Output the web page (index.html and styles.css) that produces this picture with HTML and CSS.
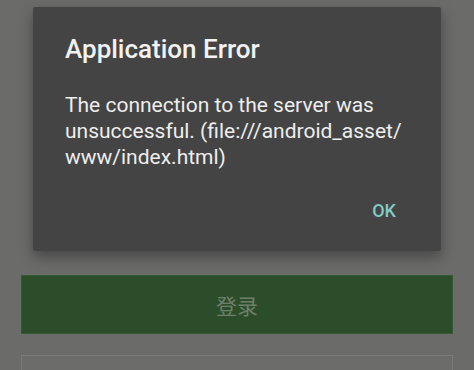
FILE: index.html
```html
<!DOCTYPE html>
<html>
<head>
<meta charset="utf-8">
<link rel="stylesheet" href="styles.css">
</head>
<body>
<div class="page">
  <div class="top-spacer"></div>
  <button class="login">登录</button>
  <div class="field"></div>
</div>
<div class="scrim"></div>
<div class="dialog">
  <h1 class="title">Application Error</h1>
  <p class="message">The connection to the server was unsuccessful. (file:///android_asset/<wbr>www/index.html)</p>
  <div class="actions"><span class="ok">OK</span></div>
</div>
</body>
</html>
```

FILE: styles.css
```css
html, body {
  margin: 0;
  padding: 0;
  width: 474px;
  height: 370px;
  overflow: hidden;
  background: #6b6c69;
  font-family: Roboto, "Noto Sans CJK SC", sans-serif;
}
.page {
  display: flex;
  flex-direction: column;
  padding: 0 21px;
}
.top-spacer {
  height: 275px;
}
.login {
  height: 59px;
  width: 100%;
  border: 1px solid #355a33;
  background: #2c4d2a;
  color: #6e8068;
  font-size: 21px;
  font-family: "Noto Sans CJK SC", sans-serif;
  padding: 0;
}
.field {
  margin-top: 21px;
  height: 14px;
  border: 1px solid #7a7b78;
  border-bottom: none;
  background: #6c6d6a;
}
.scrim {
  position: absolute;
  inset: 0;
}
.dialog {
  position: absolute;
  left: 33px;
  top: 7px;
  width: 408px;
  height: 244px;
  box-sizing: border-box;
  background: #444444;
  border-radius: 2px;
  box-shadow: 0 6px 14px rgba(0,0,0,0.35);
  padding: 27px 32px 0 32px;
  display: flex;
  flex-direction: column;
}
.title {
  margin: 0;
  font-size: 26px;
  font-weight: 500;
  color: #f2f2f2;
  line-height: 30px;
}
.message {
  margin: 28px 0 0 0;
  font-size: 21px;
  line-height: 26px;
  color: #eeeeee;
}
.actions {
  display: flex;
  justify-content: flex-end;
  margin-top: 30px;
  padding-right: 13px;
  line-height: 22px;
}
.ok {
  font-size: 18px;
  font-weight: 500;
  color: #80cbc4;
}
```
